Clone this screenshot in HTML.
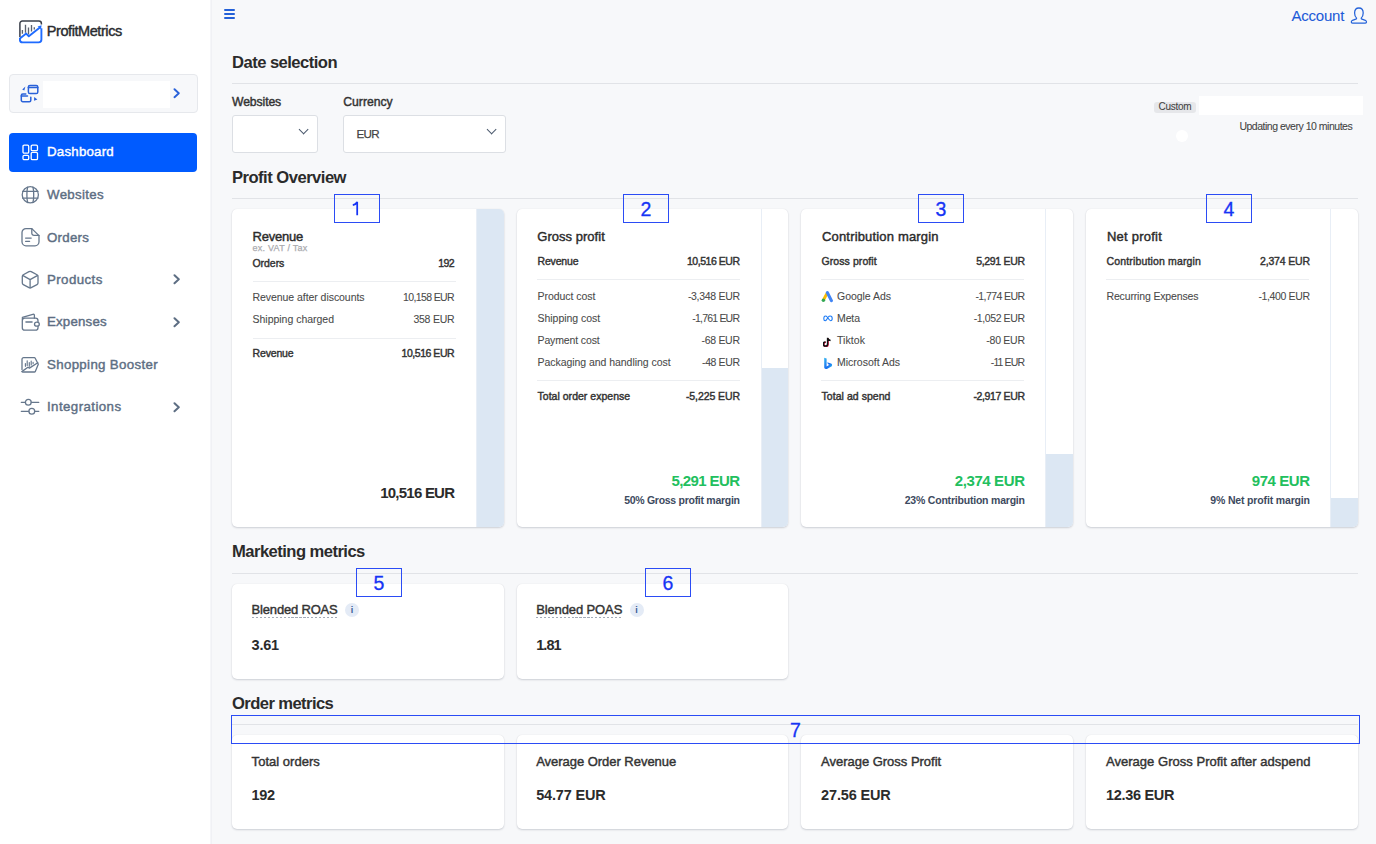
<!DOCTYPE html>
<html><head><meta charset="utf-8">
<style>
*{box-sizing:border-box;margin:0;padding:0}
html,body{width:1376px;height:844px;overflow:hidden}
body{font-family:"Liberation Sans",sans-serif;background:#f7f8fa;color:#333;position:relative}
.abs{position:absolute}
.t{position:absolute;line-height:1;white-space:nowrap}
#side{position:absolute;left:0;top:0;width:210px;height:844px;background:#fff;box-shadow:1px 0 0 #f5f6f9,2px 0 0 #f0f1f5}
.chev{position:absolute;left:171px;width:7px;height:7px;border-right:1.7px solid #5b6b80;border-top:1.7px solid #5b6b80;transform:rotate(45deg)}
.dchev{position:absolute;width:7.2px;height:7.2px;border-right:1.4px solid #4b5a6e;border-bottom:1.4px solid #4b5a6e;transform:rotate(45deg)}
.hr{position:absolute;left:232px;width:1126px;height:1px;background:#e1e3e7}
.card{position:absolute;background:#fff;border-radius:5px;box-shadow:0 1px 2px rgba(40,50,70,.20),0 0 1px rgba(40,50,70,.10);overflow:hidden}
.bar{position:absolute;right:0;top:0;bottom:0;width:27.6px;border-left:1px solid #e8eef6}
.barfill{position:absolute;left:0;right:0;bottom:0;background:#dce7f3}
.sep{position:absolute;width:203px;height:1px;background:#eceef1}
.lbl{position:absolute;border:1.3px solid #2b4cf5;color:#1634f5;font-size:19.5px;-webkit-text-stroke:0.3px #1634f5;text-align:center;line-height:28px;font-family:"Liberation Sans",sans-serif}
.ic{position:absolute;fill:none;stroke:#66778c;stroke-width:1.3;stroke-linecap:round;stroke-linejoin:round}
.info{position:absolute;width:14px;height:14px;border-radius:50%;background:#e4ebf6;color:#3b5998;font-size:9px;font-weight:bold;text-align:center;line-height:14px}
.dot{position:absolute;height:1px;background:repeating-linear-gradient(90deg,#a3abb8 0 2.2px,transparent 2.2px 3.95px)}
</style></head>
<body>
<div id="side">
  <!-- logo -->
  <svg class="abs" style="left:18.5px;top:20px" width="24" height="24" viewBox="0 0 24 24">
    <path d="M0.9 17 V3.6 a2.5 2.5 0 0 1 2.5 -2.5 H19.9 a2.5 2.5 0 0 1 2.5 2.5 V4.6" fill="none" stroke="#3b404b" stroke-width="1.5"/>
    <path d="M3.4 13.8 V9.9 M6.5 12.8 V4.7 M9.5 14.6 V7.6 M12.5 11.6 V5 M15.3 9.6 V7.3" stroke="#5c6370" stroke-width="1.35"/>
    <path d="M0.9 18.4 L7.2 13.6 L9.8 16.3 L21.2 7.2" fill="none" stroke="#1f6bff" stroke-width="1.9" stroke-linejoin="round" stroke-linecap="round"/>
    <path d="M18.6 6.4 L22.6 5.2 L21.8 9.2 Z" fill="#1f6bff"/>
    <path d="M22.4 8.2 V19.6 a2.8 2.8 0 0 1 -2.8 2.8 H3.7 a2.8 2.8 0 0 1 -2.8 -2.8 V18.2" fill="none" stroke="#1f6bff" stroke-width="1.9"/>
  </svg>
  <!-- website selector -->
  <div class="abs" style="left:9px;top:73.5px;width:188.5px;height:39.5px;background:#f7f8fa;border:1px solid #e6e8ec;border-radius:4px"></div>
  <div class="abs" style="left:43px;top:81px;width:127px;height:26.5px;background:#fff"></div>
  <svg class="abs" style="left:19px;top:83px" width="22" height="22" viewBox="0 0 22 22">
    <g fill="none" stroke="#2a62d9" stroke-width="1.5" stroke-linejoin="round" stroke-linecap="round">
      <rect x="9.4" y="2.5" width="9.4" height="8" rx="1.6"/>
      <path d="M9.4 4.6 H18.8"/>
      <path d="M11.8 14.3 V17.2 a1.5 1.5 0 0 1 -1.5 1.5 H3.8 a1.5 1.5 0 0 1 -1.5 -1.5 V12.5 a1.5 1.5 0 0 1 1.5 -1.5 H6.8"/>
      <path d="M2.3 13.1 H8.5"/>
    </g>
    <path d="M6.4 3.4 L3.2 6.4 L5.3 7.4 Z" fill="#2a62d9"/>
    <path d="M15.2 14.1 L18.4 16.4 L15 17.8 Z" fill="#2a62d9"/>
  </svg>
  <svg class="abs" style="left:173px;top:88.3px" width="8" height="11" viewBox="0 0 8 11"><path d="M1.5 1.2 L5.8 5.2 L1.5 9.2" fill="none" stroke="#2a62d9" stroke-width="1.9" stroke-linecap="round" stroke-linejoin="round"/></svg>
  <!-- dashboard -->
  <div class="abs" style="left:9px;top:133px;width:188px;height:39px;background:#005bff;border-radius:4px"></div>
  <svg class="ic" style="left:21px;top:144px;stroke:#fff;stroke-width:1.3" width="18" height="17" viewBox="0 0 18 17">
    <rect x="2" y="1.2" width="5.7" height="8" rx="1.2"/>
    <rect x="2" y="11.3" width="5.7" height="4.4" rx="1.2"/>
    <rect x="10.2" y="1.2" width="6.3" height="5.5" rx="1.2"/>
    <rect x="10.2" y="8.4" width="6.3" height="7.3" rx="1.2"/>
  </svg>
  <!-- websites globe -->
  <svg class="ic" style="left:20px;top:185px;stroke-width:1.3" width="20" height="20" viewBox="0 0 20 20">
    <circle cx="10.3" cy="9.8" r="8.1"/>
    <path d="M7.8 2.1 C6.6 5 6.6 14.6 7.8 17.5 M12.8 2.1 C14 5 14 14.6 12.8 17.5"/>
    <path d="M2.6 6.3 H18 M2.6 13.1 H18"/>
  </svg>
  <!-- orders doc -->
  <svg class="ic" style="left:20px;top:227px;stroke-width:1.3" width="21" height="21" viewBox="0 0 21 21">
    <path d="M11.8 1.6 H6 a4 4 0 0 0 -4 4 V14.8 a4 4 0 0 0 4 4 H15 a4 4 0 0 0 4 -4 V8.6 Z"/>
    <path d="M11.8 1.6 V6.2 a2.2 2.2 0 0 0 2.2 2.2 H19"/>
    <path d="M5.6 11.1 H11.2 M5.6 14.3 H9.6"/>
  </svg>
  <!-- products cube -->
  <svg class="ic" style="left:20px;top:270px;stroke-width:1.3" width="20" height="20" viewBox="0 0 20 20">
    <path d="M9 1.6 a2.2 2.2 0 0 1 2.2 0 L17 4.8 a1.8 1.8 0 0 1 1 1.6 V13 a1.8 1.8 0 0 1 -1 1.6 L11.2 17.6 a2.2 2.2 0 0 1 -2.2 0 L3.3 14.6 a1.8 1.8 0 0 1 -1 -1.6 V6.4 a1.8 1.8 0 0 1 1 -1.6 Z"/>
    <path d="M2.6 5.4 L10.1 9.6 L17.7 5.4 M10.1 9.6 V17.8"/>
  </svg>
  <!-- expenses wallet -->
  <svg class="ic" style="left:20px;top:312px;stroke-width:1.3" width="21" height="20" viewBox="0 0 21 20">
    <path d="M2.4 7.8 V5.4 L12.8 2.4 a1 1 0 0 1 1.6 0.9 V6.2"/>
    <path d="M18 10 V8.7 a2.5 2.5 0 0 0 -2.5 -2.5 H4.8 a2.5 2.5 0 0 0 -2.5 2.5 V15.7 a2.5 2.5 0 0 0 2.5 2.5 H15.5 a2.5 2.5 0 0 0 2.5 -2.5 V14.4"/>
    <path d="M5.9 10 H12.1"/>
    <ellipse cx="16.9" cy="12.2" rx="2.4" ry="2"/>
  </svg>
  <!-- shopping booster -->
  <svg class="ic" style="left:20px;top:356px;stroke-width:1.3" width="21" height="18" viewBox="0 0 21 18">
    <path d="M2 13.4 V3.3 a1.6 1.6 0 0 1 1.6 -1.6 H14.4 a1 1 0 0 1 0.8 0.5 L18.3 8.2 L15.3 15.4 a1 1 0 0 1 -0.9 0.6 H2.6"/>
    <path d="M1.8 15.6 L7.9 11.3 L9.4 12.1 L17.8 6.8"/>
    <path d="M5.4 10.3 V7.6 M7.2 9.6 V4.8 M9.3 10.3 V6.6 M11.2 8.9 V5 M13.1 7.7 V6.3" stroke-width="1.15"/>
  </svg>
  <!-- integrations -->
  <svg class="ic" style="left:20px;top:398px;stroke-width:1.3" width="20" height="18" viewBox="0 0 20 18">
    <path d="M1.3 4.3 H5.3 M11.3 4.3 H18.8"/>
    <circle cx="8.3" cy="4.3" r="2.9"/>
    <path d="M1.3 13.3 H8.8 M14.8 13.3 H18.8"/>
    <circle cx="11.8" cy="13.3" r="2.9"/>
  </svg>
  <svg class="abs" style="left:172.6px;top:274.4px" width="8" height="11" viewBox="0 0 8 11"><path d="M1.5 1.2 L5.8 5.2 L1.5 9.2" fill="none" stroke="#5d6e83" stroke-width="2" stroke-linecap="round" stroke-linejoin="round"/></svg>
  <svg class="abs" style="left:172.6px;top:316.8px" width="8" height="11" viewBox="0 0 8 11"><path d="M1.5 1.2 L5.8 5.2 L1.5 9.2" fill="none" stroke="#5d6e83" stroke-width="2" stroke-linecap="round" stroke-linejoin="round"/></svg>
  <svg class="abs" style="left:172.6px;top:401.6px" width="8" height="11" viewBox="0 0 8 11"><path d="M1.5 1.2 L5.8 5.2 L1.5 9.2" fill="none" stroke="#5d6e83" stroke-width="2" stroke-linecap="round" stroke-linejoin="round"/></svg>
</div>

<!-- hamburger -->
<div class="abs" style="left:223.5px;top:9.2px;width:11.6px;height:1.6px;background:#2360d8;border-radius:1px"></div>
<div class="abs" style="left:223.5px;top:13.2px;width:11.6px;height:1.6px;background:#2360d8;border-radius:1px"></div>
<div class="abs" style="left:223.5px;top:17.2px;width:11.6px;height:1.6px;background:#2360d8;border-radius:1px"></div>
<!-- user icon -->
<svg class="abs" style="left:1350px;top:7px" width="18" height="18" viewBox="0 0 18 18">
  <path d="M6.6 11.1 C5.2 9.9 4.6 8.2 4.6 6 C4.6 2.8 6.5 1 8.9 1 C11.3 1 13.2 2.8 13.2 6 C13.2 8.2 12.6 9.9 11.2 11.1 L11.4 11.8 L15.3 13.3 C16.2 13.7 16.5 14.4 16.5 15.1 C16.5 15.8 16.1 16.2 15.4 16.2 H2.4 C1.7 16.2 1.3 15.8 1.3 15.1 C1.3 14.4 1.6 13.7 2.5 13.3 L6.4 11.8 Z" fill="none" stroke="#2563d9" stroke-width="1.25" stroke-linejoin="round"/>
</svg>

<div class="hr" style="top:83px"></div>
<div class="abs" style="left:232px;top:114.5px;width:85.6px;height:38px;background:#fff;border:1px solid #dcdfe4;border-radius:3px"></div>
<div class="abs" style="left:343px;top:114.5px;width:162.5px;height:38px;background:#fff;border:1px solid #dcdfe4;border-radius:3px"></div>
<div class="dchev" style="left:300px;top:126px"></div>
<div class="dchev" style="left:488px;top:126px"></div>

<div class="abs" style="left:1154px;top:101.5px;width:41.5px;height:11.5px;background:#e6e7ea;border-radius:3px"></div>
<div class="abs" style="left:1199px;top:96.3px;width:164px;height:18.7px;background:#fff"></div>
<div class="abs" style="left:1175.6px;top:129.8px;width:12px;height:12px;background:#fff;border-radius:50%"></div>

<div class="hr" style="top:198px"></div>

<div class="card" style="left:232px;top:208.5px;width:271.7px;height:318px">
  <div class="bar"><div class="barfill" style="top:0"></div></div>
  <div class="sep" style="left:20.5px;top:72px"></div>
  <div class="sep" style="left:20.5px;top:129px"></div>
</div>
<div class="card" style="left:516.5px;top:208.5px;width:271.8px;height:318px">
  <div class="bar"><div class="barfill" style="top:159px"></div></div>
  <div class="sep" style="left:20.5px;top:70.5px"></div>
  <div class="sep" style="left:20.5px;top:171px"></div>
</div>
<div class="card" style="left:800.8px;top:208.5px;width:272px;height:318px">
  <div class="bar"><div class="barfill" style="top:245px"></div></div>
  <div class="sep" style="left:20.5px;top:70.5px"></div>
  <div class="sep" style="left:20.5px;top:171px"></div>
</div>
<div class="card" style="left:1085.8px;top:208.5px;width:272px;height:318px">
  <div class="bar"><div class="barfill" style="top:289px"></div></div>
  <div class="sep" style="left:20.5px;top:70.5px"></div>
</div>

<!-- ad icons -->
<svg class="abs" style="left:821px;top:290.5px" width="13" height="12" viewBox="0 0 13 12">
  <path d="M6 2.4 L3 8" stroke="#fbbc04" stroke-width="2.9" stroke-linecap="round"/>
  <path d="M6.4 1.7 L10.4 9.6" stroke="#4285f4" stroke-width="3.1" stroke-linecap="round"/>
  <circle cx="2.4" cy="9.3" r="1.75" fill="#34a853"/>
</svg>
<svg class="abs" style="left:822.5px;top:314.5px" width="10" height="7" viewBox="0 0 10 7">
  <path d="M2.5 1 C1 1 0.8 3 0.8 3.8 C0.8 5 1.5 5.8 2.2 5.8 C3.5 5.8 4.6 3 5.3 2 C6 1 6.5 1 7.3 1 C8.6 1 9.2 2.6 9.2 3.6 C9.2 4.8 8.6 5.8 7.6 5.8 C6.4 5.8 5 3 4.2 2 C3.6 1.2 3 1 2.5 1 Z" fill="none" stroke="#1d7bf5" stroke-width="1.1"/>
</svg>
<svg class="abs" style="left:822.5px;top:336.5px" width="9" height="10" viewBox="0 0 9 10">
  <path d="M4.6 0.8 V7 a2.1 2.1 0 1 1 -2.1 -2.1" fill="none" stroke="#ee1d52" stroke-width="1.5" transform="translate(0.5 0.4)"/>
  <path d="M4.6 0.8 V7 a2.1 2.1 0 1 1 -2.1 -2.1 M4.6 1 c0.4 1.5 1.5 2.3 3 2.4" fill="none" stroke="#111" stroke-width="1.5"/>
</svg>
<svg class="abs" style="left:822.5px;top:356.5px" width="10" height="13" viewBox="0 0 10 13">
  <defs><linearGradient id="bg1" x1="0" y1="0" x2="1" y2="1"><stop offset="0" stop-color="#37b9f1"/><stop offset="0.6" stop-color="#1a6cf0"/><stop offset="1" stop-color="#2fd0f5"/></linearGradient></defs>
  <path d="M1.2 0.8 L3.6 1.6 V9.5 L6.5 7.8 L5 7.2 L4.2 5.2 L8.6 6.8 C9.2 7 9.3 8.6 8.8 9.2 L4 12 C3 12.4 1.2 11.8 1.2 10.6 Z" fill="url(#bg1)"/>
</svg>

<div class="hr" style="top:572.5px"></div>
<div class="card" style="left:232px;top:583.5px;width:271.7px;height:95px"></div>
<div class="card" style="left:516.5px;top:583.5px;width:271.8px;height:95px"></div>
<div class="dot" style="left:251.6px;top:617px;width:86px"></div>
<div class="dot" style="left:536.2px;top:617px;width:86px"></div>
<div class="info" style="left:345px;top:602.7px">i</div>
<div class="info" style="left:629.5px;top:602.7px">i</div>

<div class="hr" style="top:723.8px"></div>
<div class="card" style="left:232px;top:735px;width:271.7px;height:93.8px"></div>
<div class="card" style="left:516.5px;top:735px;width:271.8px;height:93.8px"></div>
<div class="card" style="left:800.8px;top:735px;width:272px;height:93.8px"></div>
<div class="card" style="left:1085.8px;top:735px;width:272px;height:93.8px"></div>

<div class=t style="left:46.80px;top:23.83px;font-size:14.5px;font-weight:normal;color:#2a2c30;letter-spacing:-0.429px;-webkit-text-stroke:0.42px #2a2c30;">ProfitMetrics</div>
<div class=t style="left:47.00px;top:145.14px;font-size:13.3px;font-weight:normal;color:#ffffff;letter-spacing:0.215px;-webkit-text-stroke:0.42px #ffffff;">Dashboard</div>
<div class=t style="left:47.00px;top:187.74px;font-size:13.3px;font-weight:normal;color:#5d6e83;letter-spacing:0.318px;-webkit-text-stroke:0.42px #5d6e83;">Websites</div>
<div class=t style="left:47.00px;top:230.54px;font-size:13.3px;font-weight:normal;color:#5d6e83;letter-spacing:0.260px;-webkit-text-stroke:0.42px #5d6e83;">Orders</div>
<div class=t style="left:47.00px;top:272.94px;font-size:13.3px;font-weight:normal;color:#5d6e83;letter-spacing:0.402px;-webkit-text-stroke:0.42px #5d6e83;">Products</div>
<div class=t style="left:47.00px;top:315.34px;font-size:13.3px;font-weight:normal;color:#5d6e83;letter-spacing:0.174px;-webkit-text-stroke:0.42px #5d6e83;">Expenses</div>
<div class=t style="left:47.00px;top:357.74px;font-size:13.3px;font-weight:normal;color:#5d6e83;letter-spacing:0.330px;-webkit-text-stroke:0.42px #5d6e83;">Shopping Booster</div>
<div class=t style="left:47.00px;top:400.14px;font-size:13.3px;font-weight:normal;color:#5d6e83;letter-spacing:0.418px;-webkit-text-stroke:0.42px #5d6e83;">Integrations</div>
<div class=t style="left:1291.60px;top:8.00px;font-size:15px;font-weight:normal;color:#1d5bd8;letter-spacing:-0.243px;-webkit-text-stroke:0.08px #1d5bd8;">Account</div>
<div class=t style="left:232.00px;top:54.85px;font-size:16.6px;font-weight:bold;color:#2b2b2b;letter-spacing:-0.537px;">Date selection</div>
<div class=t style="left:232.00px;top:96.47px;font-size:12.2px;font-weight:normal;color:#333;letter-spacing:-0.101px;-webkit-text-stroke:0.42px #333;">Websites</div>
<div class=t style="left:343.30px;top:96.47px;font-size:12.2px;font-weight:normal;color:#333;letter-spacing:-0.019px;-webkit-text-stroke:0.42px #333;">Currency</div>
<div class=t style="left:356.50px;top:127.58px;font-size:11.6px;font-weight:normal;color:#444;letter-spacing:-0.628px;-webkit-text-stroke:0.25px #444;">EUR</div>
<div class=t style="left:1158.60px;top:101.83px;font-size:10px;font-weight:normal;color:#444;letter-spacing:-0.292px;-webkit-text-stroke:0.08px #444;">Custom</div>
<div class=t style="left:1239.40px;top:120.51px;font-size:10.5px;font-weight:normal;color:#444;letter-spacing:-0.484px;-webkit-text-stroke:0.08px #444;">Updating every 10 minutes</div>
<div class=t style="left:232.00px;top:169.85px;font-size:16.6px;font-weight:bold;color:#2b2b2b;letter-spacing:-0.516px;">Profit Overview</div>
<div class=t style="left:252.50px;top:229.50px;font-size:13px;font-weight:normal;color:#2b2b2b;letter-spacing:-0.221px;-webkit-text-stroke:0.42px #2b2b2b;">Revenue</div>
<div class=t style="left:252.50px;top:243.78px;font-size:9px;font-weight:normal;color:#ababaf;letter-spacing:0.242px;-webkit-text-stroke:0.25px #ababaf;">ex. VAT / Tax</div>
<div class=t style="left:252.50px;top:257.51px;font-size:10.5px;font-weight:normal;color:#333;letter-spacing:-0.049px;-webkit-text-stroke:0.42px #333;">Orders</div>
<div class=t style="right:921.94px;top:257.51px;font-size:10.5px;font-weight:normal;color:#333;letter-spacing:-0.544px;-webkit-text-stroke:0.42px #333;">192</div>
<div class=t style="left:252.50px;top:292.31px;font-size:10.5px;font-weight:normal;color:#4a4a4a;letter-spacing:-0.054px;-webkit-text-stroke:0.08px #4a4a4a;">Revenue after discounts</div>
<div class=t style="right:922.02px;top:292.31px;font-size:10.5px;font-weight:normal;color:#4a4a4a;letter-spacing:-0.620px;-webkit-text-stroke:0.08px #4a4a4a;">10,158 EUR</div>
<div class=t style="left:252.50px;top:314.11px;font-size:10.5px;font-weight:normal;color:#4a4a4a;letter-spacing:-0.015px;-webkit-text-stroke:0.08px #4a4a4a;">Shipping charged</div>
<div class=t style="right:921.63px;top:314.11px;font-size:10.5px;font-weight:normal;color:#4a4a4a;letter-spacing:-0.230px;-webkit-text-stroke:0.08px #4a4a4a;">358 EUR</div>
<div class=t style="left:252.50px;top:348.11px;font-size:10.5px;font-weight:normal;color:#333;letter-spacing:-0.147px;-webkit-text-stroke:0.42px #333;">Revenue</div>
<div class=t style="right:921.86px;top:348.11px;font-size:10.5px;font-weight:normal;color:#333;letter-spacing:-0.460px;-webkit-text-stroke:0.42px #333;">10,516 EUR</div>
<div class=t style="right:921.77px;top:484.50px;font-size:15px;font-weight:bold;color:#2b2b2b;letter-spacing:-0.772px;">10,516 EUR</div>
<div class=t style="left:537.30px;top:229.60px;font-size:13px;font-weight:normal;color:#2b2b2b;letter-spacing:0.026px;-webkit-text-stroke:0.42px #2b2b2b;">Gross profit</div>
<div class=t style="left:537.50px;top:256.21px;font-size:10.5px;font-weight:normal;color:#333;letter-spacing:-0.162px;-webkit-text-stroke:0.42px #333;">Revenue</div>
<div class=t style="right:636.46px;top:256.21px;font-size:10.5px;font-weight:normal;color:#333;letter-spacing:-0.460px;-webkit-text-stroke:0.42px #333;">10,516 EUR</div>
<div class=t style="left:537.50px;top:290.71px;font-size:10.5px;font-weight:normal;color:#4a4a4a;letter-spacing:-0.048px;-webkit-text-stroke:0.08px #4a4a4a;">Product cost</div>
<div class=t style="right:636.31px;top:290.71px;font-size:10.5px;font-weight:normal;color:#4a4a4a;letter-spacing:-0.306px;-webkit-text-stroke:0.08px #4a4a4a;">-3,348 EUR</div>
<div class=t style="left:537.50px;top:312.71px;font-size:10.5px;font-weight:normal;color:#4a4a4a;letter-spacing:-0.027px;-webkit-text-stroke:0.08px #4a4a4a;">Shipping cost</div>
<div class=t style="right:636.80px;top:312.71px;font-size:10.5px;font-weight:normal;color:#4a4a4a;letter-spacing:-0.796px;-webkit-text-stroke:0.08px #4a4a4a;">-1,761 EUR</div>
<div class=t style="left:537.50px;top:334.81px;font-size:10.5px;font-weight:normal;color:#4a4a4a;letter-spacing:-0.127px;-webkit-text-stroke:0.08px #4a4a4a;">Payment cost</div>
<div class=t style="right:636.30px;top:334.81px;font-size:10.5px;font-weight:normal;color:#4a4a4a;letter-spacing:-0.295px;-webkit-text-stroke:0.08px #4a4a4a;">-68 EUR</div>
<div class=t style="left:537.50px;top:356.91px;font-size:10.5px;font-weight:normal;color:#4a4a4a;letter-spacing:-0.047px;-webkit-text-stroke:0.08px #4a4a4a;">Packaging and handling cost</div>
<div class=t style="right:636.38px;top:356.91px;font-size:10.5px;font-weight:normal;color:#4a4a4a;letter-spacing:-0.381px;-webkit-text-stroke:0.08px #4a4a4a;">-48 EUR</div>
<div class=t style="left:537.50px;top:390.61px;font-size:10.5px;font-weight:normal;color:#333;letter-spacing:0.025px;-webkit-text-stroke:0.42px #333;">Total order expense</div>
<div class=t style="right:636.09px;top:390.61px;font-size:10.5px;font-weight:normal;color:#333;letter-spacing:-0.086px;-webkit-text-stroke:0.42px #333;">-5,225 EUR</div>
<div class=t style="right:636.62px;top:473.40px;font-size:15px;font-weight:bold;color:#22bf5e;letter-spacing:-0.619px;">5,291 EUR</div>
<div class=t style="right:636.28px;top:495.21px;font-size:10.5px;font-weight:bold;color:#3d4a60;letter-spacing:-0.276px;">50% Gross profit margin</div>
<div class=t style="left:822.00px;top:229.60px;font-size:13px;font-weight:normal;color:#2b2b2b;letter-spacing:0.171px;-webkit-text-stroke:0.42px #2b2b2b;">Contribution margin</div>
<div class=t style="left:821.50px;top:256.21px;font-size:10.5px;font-weight:normal;color:#333;letter-spacing:0.086px;-webkit-text-stroke:0.42px #333;">Gross profit</div>
<div class=t style="right:351.32px;top:256.21px;font-size:10.5px;font-weight:normal;color:#333;letter-spacing:-0.319px;-webkit-text-stroke:0.42px #333;">5,291 EUR</div>
<div class=t style="left:837.00px;top:290.71px;font-size:10.5px;font-weight:normal;color:#4a4a4a;letter-spacing:-0.030px;-webkit-text-stroke:0.08px #4a4a4a;">Google Ads</div>
<div class=t style="right:351.59px;top:290.71px;font-size:10.5px;font-weight:normal;color:#4a4a4a;letter-spacing:-0.586px;-webkit-text-stroke:0.08px #4a4a4a;">-1,774 EUR</div>
<div class=t style="left:837.00px;top:312.71px;font-size:10.5px;font-weight:normal;color:#4a4a4a;letter-spacing:-0.111px;-webkit-text-stroke:0.08px #4a4a4a;">Meta</div>
<div class=t style="right:351.39px;top:312.71px;font-size:10.5px;font-weight:normal;color:#4a4a4a;letter-spacing:-0.386px;-webkit-text-stroke:0.08px #4a4a4a;">-1,052 EUR</div>
<div class=t style="left:837.00px;top:334.81px;font-size:10.5px;font-weight:normal;color:#4a4a4a;letter-spacing:0.062px;-webkit-text-stroke:0.08px #4a4a4a;">Tiktok</div>
<div class=t style="right:351.27px;top:334.81px;font-size:10.5px;font-weight:normal;color:#4a4a4a;letter-spacing:-0.267px;-webkit-text-stroke:0.08px #4a4a4a;">-80 EUR</div>
<div class=t style="left:837.00px;top:356.91px;font-size:10.5px;font-weight:normal;color:#4a4a4a;letter-spacing:0.005px;-webkit-text-stroke:0.08px #4a4a4a;">Microsoft Ads</div>
<div class=t style="right:351.88px;top:356.91px;font-size:10.5px;font-weight:normal;color:#4a4a4a;letter-spacing:-0.883px;-webkit-text-stroke:0.08px #4a4a4a;">-11 EUR</div>
<div class=t style="left:821.50px;top:390.61px;font-size:10.5px;font-weight:normal;color:#333;letter-spacing:0.049px;-webkit-text-stroke:0.42px #333;">Total ad spend</div>
<div class=t style="right:351.37px;top:390.61px;font-size:10.5px;font-weight:normal;color:#333;letter-spacing:-0.366px;-webkit-text-stroke:0.42px #333;">-2,917 EUR</div>
<div class=t style="right:351.39px;top:473.40px;font-size:15px;font-weight:bold;color:#22bf5e;letter-spacing:-0.386px;">2,374 EUR</div>
<div class=t style="right:351.21px;top:495.21px;font-size:10.5px;font-weight:bold;color:#3d4a60;letter-spacing:-0.206px;">23% Contribution margin</div>
<div class=t style="left:1107.00px;top:229.60px;font-size:13px;font-weight:normal;color:#2b2b2b;letter-spacing:0.225px;-webkit-text-stroke:0.42px #2b2b2b;">Net profit</div>
<div class=t style="left:1106.50px;top:256.21px;font-size:10.5px;font-weight:normal;color:#333;letter-spacing:0.156px;-webkit-text-stroke:0.42px #333;">Contribution margin</div>
<div class=t style="right:66.16px;top:256.21px;font-size:10.5px;font-weight:normal;color:#333;letter-spacing:-0.164px;-webkit-text-stroke:0.42px #333;">2,374 EUR</div>
<div class=t style="left:1106.50px;top:290.71px;font-size:10.5px;font-weight:normal;color:#4a4a4a;letter-spacing:-0.153px;-webkit-text-stroke:0.08px #4a4a4a;">Recurring Expenses</div>
<div class=t style="right:66.37px;top:290.71px;font-size:10.5px;font-weight:normal;color:#4a4a4a;letter-spacing:-0.366px;-webkit-text-stroke:0.08px #4a4a4a;">-1,400 EUR</div>
<div class=t style="right:66.44px;top:473.40px;font-size:15px;font-weight:bold;color:#22bf5e;letter-spacing:-0.439px;">974 EUR</div>
<div class=t style="right:66.15px;top:495.21px;font-size:10.5px;font-weight:bold;color:#3d4a60;letter-spacing:-0.154px;">9% Net profit margin</div>
<div class=t style="left:232.00px;top:544.25px;font-size:16.6px;font-weight:bold;color:#2b2b2b;letter-spacing:-0.543px;">Marketing metrics</div>
<div class=t style="left:251.60px;top:602.90px;font-size:13px;font-weight:normal;color:#333;letter-spacing:-0.181px;-webkit-text-stroke:0.42px #333;">Blended ROAS</div>
<div class=t style="left:536.20px;top:602.90px;font-size:13px;font-weight:normal;color:#333;letter-spacing:-0.121px;-webkit-text-stroke:0.42px #333;">Blended POAS</div>
<div class=t style="left:251.60px;top:637.93px;font-size:14.5px;font-weight:bold;color:#2b2b2b;letter-spacing:-0.209px;">3.61</div>
<div class=t style="left:536.20px;top:637.93px;font-size:14.5px;font-weight:bold;color:#2b2b2b;letter-spacing:-0.934px;">1.81</div>
<div class=t style="left:232.00px;top:695.55px;font-size:16.6px;font-weight:bold;color:#2b2b2b;letter-spacing:-0.588px;">Order metrics</div>
<div class=t style="left:251.60px;top:754.90px;font-size:13px;font-weight:normal;color:#333;letter-spacing:0.032px;-webkit-text-stroke:0.42px #333;">Total orders</div>
<div class=t style="left:251.60px;top:787.83px;font-size:14.5px;font-weight:bold;color:#2b2b2b;letter-spacing:-0.334px;">192</div>
<div class=t style="left:536.20px;top:754.90px;font-size:13px;font-weight:normal;color:#333;letter-spacing:-0.033px;-webkit-text-stroke:0.42px #333;">Average Order Revenue</div>
<div class=t style="left:536.20px;top:787.83px;font-size:14.5px;font-weight:bold;color:#2b2b2b;letter-spacing:-0.160px;">54.77 EUR</div>
<div class=t style="left:821.10px;top:754.90px;font-size:13px;font-weight:normal;color:#333;letter-spacing:-0.021px;-webkit-text-stroke:0.42px #333;">Average Gross Profit</div>
<div class=t style="left:821.10px;top:787.83px;font-size:14.5px;font-weight:bold;color:#2b2b2b;letter-spacing:-0.171px;">27.56 EUR</div>
<div class=t style="left:1106.00px;top:754.90px;font-size:13px;font-weight:normal;color:#333;letter-spacing:0.025px;-webkit-text-stroke:0.42px #333;">Average Gross Profit after adspend</div>
<div class=t style="left:1106.00px;top:787.83px;font-size:14.5px;font-weight:bold;color:#2b2b2b;letter-spacing:-0.304px;">12.36 EUR</div>

<div class="lbl" style="left:334px;top:194px;width:46px;height:29px"><svg style="position:absolute;left:16.6px;top:6.2px" width="8" height="15" viewBox="0 0 8 15"><path d="M5.2 0.8 V14.2 M5.2 0.9 C4.4 2.6 2.8 3.8 0.8 4.2" fill="none" stroke="#1634f5" stroke-width="1.75"/></svg></div>
<div class="lbl" style="left:623px;top:194px;width:46px;height:29px">2</div>
<div class="lbl" style="left:918px;top:194px;width:46px;height:29px">3</div>
<div class="lbl" style="left:1206px;top:194px;width:46px;height:29px">4</div>
<div class="lbl" style="left:356px;top:568px;width:46px;height:29px">5</div>
<div class="lbl" style="left:645px;top:568px;width:46px;height:29px">6</div>
<div class="lbl" style="left:231px;top:714.8px;width:1129px;height:29px">7</div>
</body></html>
